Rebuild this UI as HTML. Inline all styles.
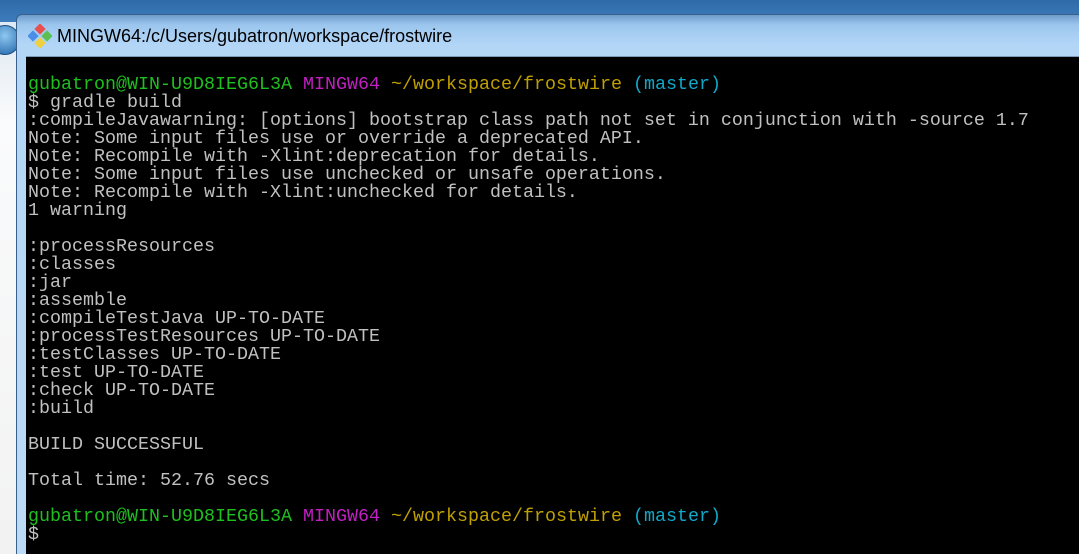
<!DOCTYPE html>
<html><head><meta charset="utf-8"><style>
*{margin:0;padding:0;box-sizing:border-box}
html,body{width:1079px;height:554px;overflow:hidden}
body{position:relative;background:#eef2f7;font-family:"Liberation Sans",sans-serif}
.bgtop{position:absolute;left:0;top:0;width:1079px;height:22px;background:linear-gradient(#2f6aa8,#3d7cbc)}
.leftpane{position:absolute;left:0;top:22px;width:17px;height:532px;background:linear-gradient(#dfe9f3 0,#e9eff5 40px,#fafbfc 100px,#f2f2f2 100%)}
.back{position:absolute;left:-10px;top:25px;width:30px;height:30px;border-radius:50%;background:radial-gradient(circle at 50% 35%,#8ec7f0,#1f64a8);border:1px solid #1b4f85}
.win{position:absolute;left:16px;top:14px;width:1063px;height:540px;background:linear-gradient(#6e9ccc 0,#9cc6ee 10px,#b3d6f7 30px,#bcdaf5 100%);border:1px solid #3a5f88;border-right:none;border-bottom:none;border-radius:6px 0 0 0}
.title{position:absolute;left:57px;top:26px;font-size:18px;color:#000}
.term{position:absolute;left:26px;top:56px;width:1053px;height:498px;background:#000;border-top:1px solid #7a9ab8}
pre{position:absolute;left:28px;top:76px;font-family:"Liberation Mono",monospace;font-size:18.33px;line-height:18px;color:#c0c0c0}
.g{color:#1ec01e}.m{color:#c020c0}.y{color:#c0a000}.c{color:#10a8c8}
</style></head><body>
<div class="bgtop"></div>
<div class="leftpane"></div>
<div class="back"></div>
<div class="win"></div>
<svg style="position:absolute;left:28px;top:24px" width="24" height="24" viewBox="0 0 24 24">
<rect x="8" y="1" width="8" height="8" transform="rotate(45 12 5)" fill="#e85050"/>
<rect x="1" y="8" width="8" height="8" transform="rotate(45 5 12)" fill="#4a8ee8"/>
<rect x="15" y="8" width="8" height="8" transform="rotate(45 19 12)" fill="#5cc050"/>
<rect x="8" y="15" width="8" height="8" transform="rotate(45 12 19)" fill="#f0d040"/>
</svg>
<div class="title">MINGW64:/c/Users/gubatron/workspace/frostwire</div>
<div class="term"></div>
<pre><span class="g">gubatron@WIN-U9D8IEG6L3A</span> <span class="m">MINGW64</span> <span class="y">~/workspace/frostwire</span> <span class="c">(master)</span>
$ gradle build
:compileJavawarning: [options] bootstrap class path not set in conjunction with -source 1.7
Note: Some input files use or override a deprecated API.
Note: Recompile with -Xlint:deprecation for details.
Note: Some input files use unchecked or unsafe operations.
Note: Recompile with -Xlint:unchecked for details.
1 warning

:processResources
:classes
:jar
:assemble
:compileTestJava UP-TO-DATE
:processTestResources UP-TO-DATE
:testClasses UP-TO-DATE
:test UP-TO-DATE
:check UP-TO-DATE
:build

BUILD SUCCESSFUL

Total time: 52.76 secs

<span class="g">gubatron@WIN-U9D8IEG6L3A</span> <span class="m">MINGW64</span> <span class="y">~/workspace/frostwire</span> <span class="c">(master)</span>
$</pre>
</body></html>
